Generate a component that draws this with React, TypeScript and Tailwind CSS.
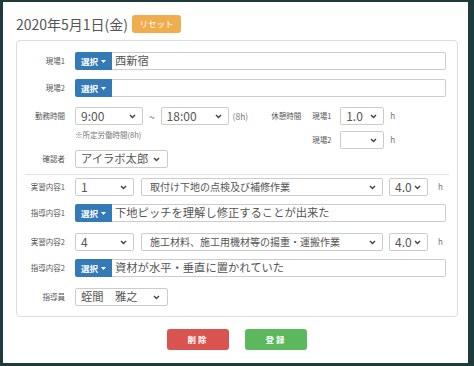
import React from "react";

const font = { fontFamily: '"Noto Sans CJK JP", "Noto Sans", sans-serif' };

function Chevron() {
  return (
    <svg width="7" height="5" viewBox="0 0 7 5" className="shrink-0">
      <polyline points="1,1 3.5,3.6 6,1" fill="none" stroke="#444" strokeWidth="1.4" />
    </svg>
  );
}

function Label({ children }: { children: React.ReactNode }) {
  return <div className="w-[40px] shrink-0 text-right text-[7.5px] leading-none text-[#555]">{children}</div>;
}

// text size passed separately so it isn't fighting a default class
function Select({ value, className, size = "text-[12px]" }: { value?: string; className: string; size?: string }) {
  return (
    <div className={`flex h-[18px] items-center justify-between overflow-hidden whitespace-nowrap rounded-[2px] border border-[#ccc] bg-white pr-[6px] text-[#555] ${size} ${className}`}>
      <span className="leading-none">{value}</span>
      <Chevron />
    </div>
  );
}

function PickInput({ value }: { value?: string }) {
  return (
    <div className="flex h-[18px] flex-1">
      <div className="flex w-[37px] shrink-0 items-center justify-center gap-[3px] rounded-l-[2px] bg-[#337ab7] text-[8.5px] font-bold text-white">
        選択
        <svg width="5" height="3" viewBox="0 0 5 3">
          <polygon points="0,0 5,0 2.5,3" fill="#fff" />
        </svg>
      </div>
      <div className="flex flex-1 items-center whitespace-nowrap rounded-r-[2px] border border-l-0 border-[#ccc] pl-[3px] text-[11.3px] leading-none text-[#555]">
        {value}
      </div>
    </div>
  );
}

function Row({ label, children, className = "" }: { label: string; children: React.ReactNode; className?: string }) {
  return (
    <div className={`mr-[3px] flex h-[18px] items-center gap-[10px] ${className}`}>
      <Label>{label}</Label>
      {children}
    </div>
  );
}

function PracticeRow({ label, num, task, className = "" }: { label: string; num: string; task: string; className?: string }) {
  return (
    <Row label={label} className={className}>
      <Select value={num} className="w-[59px] pl-[5px]" />
      <Select value={task} size="text-[10px]" className="ml-[-3px] flex-1 pl-[8px]" />
      <Select value="4.0" className="ml-[-4px] w-[39px] pl-[5px]" />
      <span className="w-[8px] text-[8px] text-[#777]">h</span>
    </Row>
  );
}

export default function App() {
  return (
    <div style={font} className="h-[366px] w-[474px] bg-[#1d3b3b] pb-[3px] pl-[3px] pr-[6px] pt-[2px]">
      <div className="flex h-full w-full flex-col bg-white pl-[13px] pt-[12px]">
        <div className="flex h-[19px] items-center gap-[4px]">
          <span className="text-[14px] leading-none text-[#555]">2020年5月1日(金)</span>
          <button className="h-[18px] w-[49px] rounded-[3px] bg-[#f0ad4e] text-[8.5px] text-white">リセット</button>
        </div>

        <div className="mt-[7px] flex w-[442px] flex-col rounded-[4px] border border-[#ddd] px-[8px] pb-[10px] pt-[11px]">
          <Row label="現場1">
            <PickInput value="西新宿" />
          </Row>
          <Row label="現場2" className="mt-[9px]">
            <PickInput />
          </Row>

          <div className="mt-[10px] flex gap-[10px]">
            <div className="flex h-[18px] items-center">
              <Label>勤務時間</Label>
            </div>
            <div className="flex flex-col">
              <div className="flex h-[18px] items-center">
                <Select value="9:00" className="w-[68px] pl-[5px]" />
                <span className="mx-[6px] text-[10px] text-[#777]">~</span>
                <Select value="18:00" className="w-[68px] pl-[5px]" />
                <span className="ml-[4px] text-[8.5px] text-[#777]">(8h)</span>
              </div>
              <div className="mt-[6px] text-[7.5px] leading-none text-[#777]">※所定労働時間(8h)</div>
            </div>
            <div className="ml-[13px] flex h-[18px] items-center text-[7.5px] text-[#555]">休憩時間</div>
            <div className="ml-[1px] flex flex-col gap-[6px]">
              {["1.0", ""].map((v, i) => (
                <div key={i} className="flex h-[18px] items-center">
                  <span className="w-[28px] text-[7.5px] text-[#555]">{i === 0 ? "現場1" : "現場2"}</span>
                  <Select value={v} className="w-[44px] pl-[5px]" />
                  <span className="ml-[6px] text-[8px] text-[#777]">h</span>
                </div>
              ))}
            </div>
          </div>

          <Row label="確認者" className="mt-[1px]">
            <Select value="アイラボ太郎" size="text-[11.3px]" className="w-[93px] pl-[5px] pr-[7px]" />
          </Row>

          <div className="mt-[6px] h-px w-full bg-[#e2e2e2]" />

          <PracticeRow label="実習内容1" num="1" task="取付け下地の点検及び補修作業" className="mt-[3px]" />
          <Row label="指導内容1" className="mt-[8px]">
            <PickInput value="下地ピッチを理解し修正することが出来た" />
          </Row>
          <PracticeRow label="実習内容2" num="4" task="施工材料、施工用機材等の揚重・運搬作業" className="mt-[11px]" />
          <Row label="指導内容2" className="mt-[8px]">
            <PickInput value="資材が水平・垂直に置かれていた" />
          </Row>
          <Row label="指導員" className="mt-[11px]">
            <Select value="蛭間　雅之" size="text-[11.3px]" className="w-[93px] pl-[5px] pr-[7px]" />
          </Row>
        </div>

        <div className="mt-[12px] flex w-[442px] justify-center gap-[16px]">
          <button className="h-[21px] w-[62px] rounded-[3px] bg-[#d9534f] text-[8.5px] font-bold tracking-[2px] text-white">削除</button>
          <button className="h-[21px] w-[62px] rounded-[3px] bg-[#5cb85c] text-[8.5px] font-bold tracking-[2px] text-white">登録</button>
        </div>
      </div>
    </div>
  );
}
